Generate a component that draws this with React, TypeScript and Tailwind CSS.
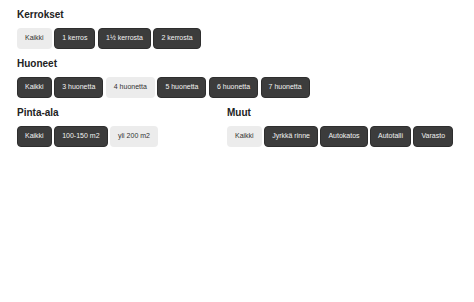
import React from "react";

type Option = { label: string; active?: boolean };

const KERROKSET: Option[] = [
  { label: "Kaikki", active: true },
  { label: "1 kerros" },
  { label: "1½ kerrosta" },
  { label: "2 kerrosta" },
];

const HUONEET: Option[] = [
  { label: "Kaikki" },
  { label: "3 huonetta" },
  { label: "4 huonetta", active: true },
  { label: "5 huonetta" },
  { label: "6 huonetta" },
  { label: "7 huonetta" },
];

const PINTA_ALA: Option[] = [
  { label: "Kaikki" },
  { label: "100-150 m2" },
  { label: "yli 200 m2", active: true },
];

const MUUT: Option[] = [
  { label: "Kaikki", active: true },
  { label: "Jyrkkä rinne" },
  { label: "Autokatos" },
  { label: "Autotalli" },
  { label: "Varasto" },
];

function Suodatin({ otsikko, valinnat }: { otsikko: string; valinnat: Option[] }) {
  return (
    <div>
      <h2 className="text-[10px] leading-[12px] font-bold text-[#222]">{otsikko}</h2>
      <div className="mt-[7px] flex gap-[2.5px]">
        {valinnat.map((v) => (
          <button
            key={v.label}
            className={
              v.active
                ? "h-[21px] rounded-[4px] bg-[#ececec] px-[8px] text-[7px] text-[#333]"
                : "h-[21px] rounded-[4px] border border-[#2e2e2e] bg-[#3c3c3c] px-[7px] text-[7px] text-[#f2f2f2]"
            }
          >
            {v.label}
          </button>
        ))}
      </div>
    </div>
  );
}

export default function App() {
  return (
    <div className="min-h-[302px] w-[474px] bg-white pl-[17px] pt-[9px] font-['Liberation_Sans',Arial,sans-serif]">
      <div className="flex flex-col gap-[9px]">
        <Suodatin otsikko="Kerrokset" valinnat={KERROKSET} />
        <Suodatin otsikko="Huoneet" valinnat={HUONEET} />
        <div className="grid grid-cols-[210px_1fr]">
          <Suodatin otsikko="Pinta-ala" valinnat={PINTA_ALA} />
          <Suodatin otsikko="Muut" valinnat={MUUT} />
        </div>
      </div>
    </div>
  );
}
